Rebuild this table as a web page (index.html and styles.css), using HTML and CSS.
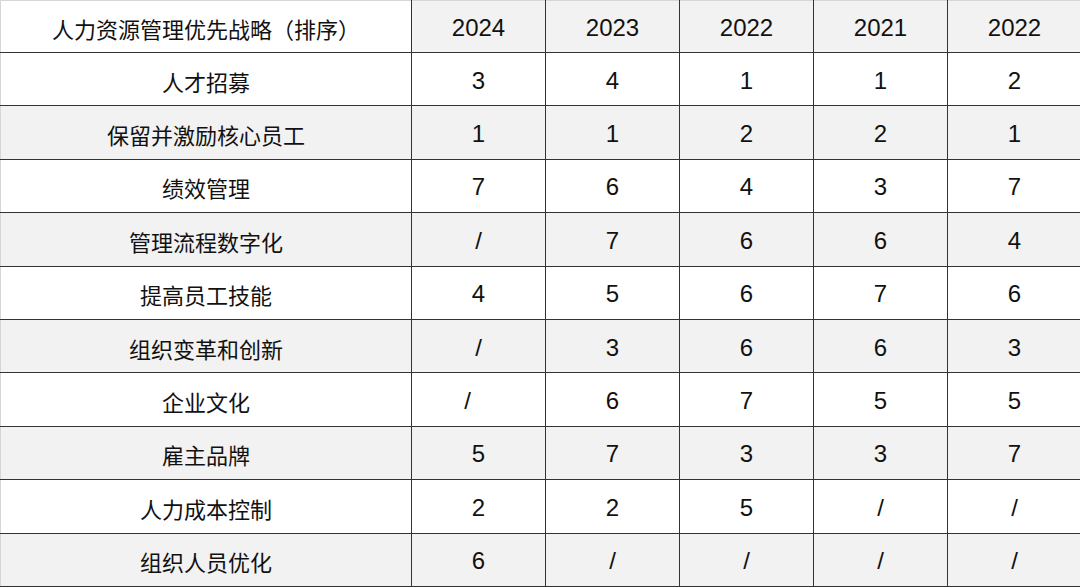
FILE: index.html
```html
<!DOCTYPE html>
<html lang="zh-CN">
<head>
<meta charset="utf-8">
<title>人力资源管理优先战略</title>
<link rel="stylesheet" href="styles.css">
</head>
<body>
<table class="rank">
  <colgroup>
    <col class="c-name">
    <col class="c-year"><col class="c-year"><col class="c-year"><col class="c-year"><col class="c-year">
  </colgroup>
  <thead>
    <tr>
      <th class="name head-name">人力资源管理优先战略（排序）</th>
      <th class="num">2024</th>
      <th class="num">2023</th>
      <th class="num">2022</th>
      <th class="num">2021</th>
      <th class="num">2022</th>
    </tr>
  </thead>
  <tbody>
    <tr><td class="name">人才招募</td><td class="num">3</td><td class="num">4</td><td class="num">1</td><td class="num">1</td><td class="num">2</td></tr>
    <tr><td class="name">保留并激励核心员工</td><td class="num">1</td><td class="num">1</td><td class="num">2</td><td class="num">2</td><td class="num">1</td></tr>
    <tr><td class="name">绩效管理</td><td class="num">7</td><td class="num">6</td><td class="num">4</td><td class="num">3</td><td class="num">7</td></tr>
    <tr><td class="name">管理流程数字化</td><td class="num">/</td><td class="num">7</td><td class="num">6</td><td class="num">6</td><td class="num">4</td></tr>
    <tr><td class="name">提高员工技能</td><td class="num">4</td><td class="num">5</td><td class="num">6</td><td class="num">7</td><td class="num">6</td></tr>
    <tr><td class="name">组织变革和创新</td><td class="num">/</td><td class="num">3</td><td class="num">6</td><td class="num">6</td><td class="num">3</td></tr>
    <tr><td class="name">企业文化</td><td class="num off">/</td><td class="num">6</td><td class="num">7</td><td class="num">5</td><td class="num">5</td></tr>
    <tr><td class="name">雇主品牌</td><td class="num">5</td><td class="num">7</td><td class="num">3</td><td class="num">3</td><td class="num">7</td></tr>
    <tr><td class="name">人力成本控制</td><td class="num">2</td><td class="num">2</td><td class="num">5</td><td class="num">/</td><td class="num">/</td></tr>
    <tr><td class="name">组织人员优化</td><td class="num">6</td><td class="num">/</td><td class="num">/</td><td class="num">/</td><td class="num">/</td></tr>
  </tbody>
</table>
</body>
</html>
```
FILE: styles.css
```css
html, body {
  margin: 0;
  padding: 0;
  background: #ffffff;
}

.rank {
  width: 1080px;
  height: 587px;
  border-collapse: collapse;
  table-layout: fixed;
  font-family: "Liberation Sans", "Noto Sans CJK SC", sans-serif;
  color: #111111;
  border-top: 1px solid #d6d6d6;
  border-left: 1px solid #d6d6d6;
}

.c-name { width: 411px; }
.c-year { width: 134px; }

.rank th, .rank td {
  height: 52px;
  padding: 3px 0 0 0;
  box-sizing: border-box;
  text-align: center;
  vertical-align: middle;
  font-weight: normal;
  border-right: 1px solid #333333;
  border-bottom: 1px solid #333333;
}

.rank th { border-top: 1px solid #d6d6d6; }
.rank tr > :first-child { border-left: 1px solid #d6d6d6; }

.rank .name {
  font-family: "Noto Sans CJK SC", sans-serif;
  font-size: 22px;
  line-height: 1;
}

.rank .num {
  font-size: 24px;
  line-height: 1;
}

.rank thead .num { background: #f2f2f2; }
.rank thead .head-name { background: #ffffff; }

.rank tbody tr:nth-child(even) td { background: #f2f2f2; }
.rank tbody tr:nth-child(odd) td { background: #ffffff; }

.rank td.off { padding-right: 22px; }
```
